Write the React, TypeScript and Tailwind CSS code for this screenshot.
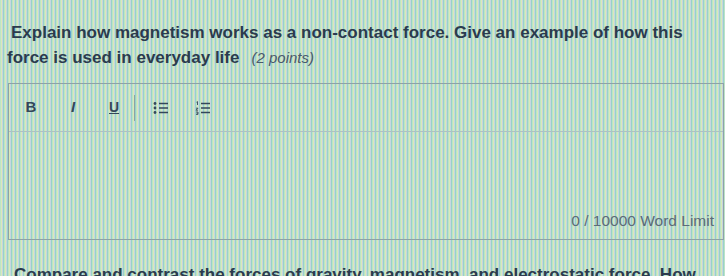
import React from "react";

function BulletIcon() {
  return (
    <svg width="16" height="14" viewBox="0 0 16 14" fill="none">
      <circle cx="2" cy="2.5" r="1.4" fill="#34475a" />
      <circle cx="2" cy="7" r="1.4" fill="#34475a" />
      <circle cx="2" cy="11.5" r="1.4" fill="#34475a" />
      <path d="M6 2.5h9M6 7h9M6 11.5h9" stroke="#34475a" strokeWidth="1.4" />
    </svg>
  );
}

function NumberIcon() {
  return (
    <svg width="16" height="14" viewBox="0 0 16 14" fill="none">
      <path d="M1.5 1.2l1-0.6v3.4M1 7.2h2l-2 2h2M1 11h2v1.2H1.6M3 12.2v1.2H1" stroke="#34475a" strokeWidth="0.9" />
      <path d="M6 2.5h9M6 7h9M6 11.5h9" stroke="#34475a" strokeWidth="1.4" />
    </svg>
  );
}

export default function App() {
  return (
    <div
      className="w-[725px] h-[276px] overflow-hidden bg-[#bddccb] bg-[repeating-linear-gradient(90deg,#bce3c8_0px,#bce3c8_1px,#d9eab8_1px,#d9eab8_2px,#c6d5e0_2px,#c6d5e0_3px,#98d2c8_3px,#98d2c8_4px)] text-[#2b3b4e]"
      style={{ fontFamily: '"Liberation Sans", Arial, sans-serif' }}
    >
      <p className="pt-[20px] pl-[7px] pr-[20px] indent-[4px] text-[17px] leading-[25px] font-bold">
        Explain how magnetism works as a non-contact force. Give an example of how this force is used in everyday life
        <span className="ml-[12px] font-normal italic text-[15px] text-[#4a5a6c]">(2 points)</span>
      </p>

      <div className="mt-[13px] ml-[8px] w-[716px] h-[157px] border border-[#8ea2a6] flex flex-col">
        <div className="h-[48px] flex items-center border-b border-[#adc2c2] text-[#34475a]">
          <span className="ml-[15px] w-[14px] text-center text-[15px] font-bold">B</span>
          <span className="ml-[30px] w-[10px] text-center text-[15px] font-bold italic">I</span>
          <span className="ml-[31px] w-[10px] text-center text-[14px] font-bold underline">U</span>
          <span className="ml-[15px] w-px h-[26px] bg-[#8ea2a6]" />
          <span className="ml-[18px] flex"><BulletIcon /></span>
          <span className="ml-[26px] flex"><NumberIcon /></span>
        </div>
        <div className="flex-1" />
        <div className="pb-[8px] pr-[9px] text-right text-[15.5px] text-[#5c6b78] leading-[20px]">
          0 / 10000 Word Limit
        </div>
      </div>

      <p className="mt-[22px] pl-[14px] text-[17px] leading-[25px] font-bold whitespace-nowrap">
        Compare and contrast the forces of gravity, magnetism, and electrostatic force. How
      </p>
    </div>
  );
}
